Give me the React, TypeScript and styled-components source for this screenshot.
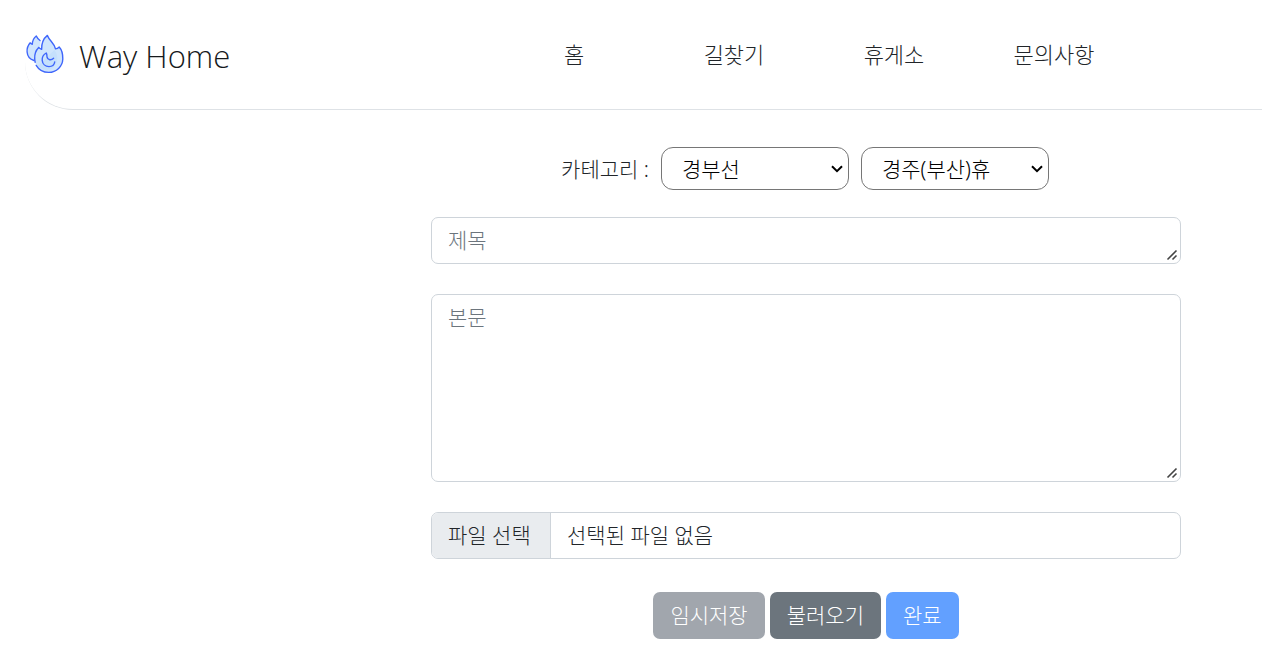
import React from "react";
import styled, { createGlobalStyle, css } from "styled-components";

const GlobalStyle = createGlobalStyle`
  *, *::before, *::after { box-sizing: border-box; }
  body {
    margin: 0;
    background: #fff;
    color: #212529;
    font-family: "Noto Sans", "Noto Sans CJK KR", sans-serif;
    font-size: 21px;
    font-weight: 300;
    line-height: 30px;
  }
  button, select, textarea, input { font: inherit; }
`;

const Header = styled.header`
  display: flex;
  align-items: flex-start;
  justify-content: space-between;
  height: 110px;
  margin-left: 25px;
  padding: 32px 128px 0 0;
  border-bottom: 1px solid #dee2e6;
  border-bottom-left-radius: 48px;
`;

const Brand = styled.a`
  display: flex;
  align-items: center;
  gap: 14px;
  height: 44px;
  color: #16191c;
  font-family: "Open Sans", "Noto Sans", sans-serif;
  font-size: 31px;
  line-height: 44px;
  text-decoration: none;
  white-space: nowrap;
`;

const BrandName = styled.span`
  padding-top: 3px;
`;

const Nav = styled.nav`
  display: grid;
  grid-template-columns: repeat(4, 160px);
  text-align: center;
`;

const NavLink = styled.a`
  height: 44px;
  color: inherit;
  font-size: 22px;
  line-height: 44px;
  text-decoration: none;
`;

const Main = styled.main`
  display: flex;
  justify-content: center;
  padding: 37px 0 32px 350px;
`;

const Form = styled.form`
  display: flex;
  flex-direction: column;
  gap: 30px;
  width: 750px;
  max-width: 100%;
`;

const CategoryRow = styled.div`
  display: flex;
  align-items: center;
  justify-content: center;
  gap: 12px;
  margin: 0 2px -3px 0;
`;

const chevron = `url("data:image/svg+xml,%3Csvg xmlns='http://www.w3.org/2000/svg' width='12' height='8' viewBox='0 0 12 8'%3E%3Cpath d='M1 1.2L6 6.2L11 1.2' fill='none' stroke='%23000' stroke-width='2'/%3E%3C/svg%3E")`;

const grip = `url("data:image/svg+xml,%3Csvg xmlns='http://www.w3.org/2000/svg' width='15' height='15' viewBox='0 0 15 15'%3E%3Cpath d='M2.5 11.5L11.5 2.5M7.5 11.5L11.5 7.5' fill='none' stroke='%23444' stroke-width='1.6'/%3E%3C/svg%3E")`;

const Select = styled.select`
  appearance: none;
  width: 188px;
  height: 43px;
  padding: 0 20px;
  border: 1px solid #767676;
  border-radius: 12px;
  background: #fff ${chevron} no-repeat right 5px center;
  color: #000;
`;

const fieldFrame = css`
  width: 100%;
  border: 1px solid #ced4da;
  border-radius: 7px;
  background: #fff;
`;

const TextArea = styled.textarea<{ $height: number }>`
  ${fieldFrame}
  display: block;
  height: ${(p) => p.$height}px;
  padding: 7px 16px;
  color: #212529;
  overflow: hidden;
  resize: both;
  &::placeholder { color: #6c757d; opacity: 1; }
  &::-webkit-resizer { background: ${grip} no-repeat right bottom; }
`;

const FilePicker = styled.label`
  ${fieldFrame}
  position: relative;
  display: flex;
  height: 47px;
  line-height: 45px;
  overflow: hidden;
`;

const FileInput = styled.input`
  position: absolute;
  inset: 0;
  opacity: 0;
`;

const FileButton = styled.span`
  min-width: 119px;
  padding: 0 16px;
  border-right: 1px solid #ced4da;
  background: #e9ecef;
`;

const FileName = styled.span`
  padding: 0 16px;
`;

const Actions = styled.div`
  display: flex;
  justify-content: center;
  gap: 5px;
  padding-top: 3px;
`;

const Button = styled.button<{ $color: string }>`
  height: 47px;
  padding: 0 17px;
  border: 0;
  border-radius: 7px;
  background: ${(p) => p.$color};
  color: #fff;
  line-height: 45px;
`;

const FlameLogo = () => (
  <svg width="40" height="40" viewBox="0 0 40 40" fill="#cfe5fd" stroke="#3f66fb" strokeWidth="1.4" strokeLinecap="round" strokeLinejoin="round" aria-hidden="true">
    <path d="M15.5 6.6C14 5.5 12.4 4.2 11.4 2C8.7 4 7.4 6.6 7.3 10.3C6.3 10 5.7 9.5 5.2 8.8C2.8 11.5 1.8 14.5 2.1 18C2.4 22 5 25.3 9 26.5L15 16Z" stroke="none" />
    <path d="M15 6.5C13.5 5.5 12.2 4 11.3 2C8.7 4 7.4 6.6 7.3 10.3C6.3 10 5.7 9.5 5.2 8.8C2.8 11.5 1.8 14.5 2.1 18C2.4 22 5 25.3 9 26.5" fill="none" />
    <path d="M11 31.2C13.5 35.6 18 38.4 23.7 38.4C31.5 38.4 37.6 32.3 37.8 25C37.9 20.3 37 16 34.2 13C33.2 14 32 14.7 30.5 14.9C29.5 9.2 24.3 6.8 22.4 1.4C18.6 4.4 16.5 9 16.6 15.4C15.3 15 14.4 14.3 13.7 13.4C10.6 16.5 9.4 20.3 9.7 25Z" stroke="none" />
    <path d="M13 32L29.5 16C34 22 33 31 26 35C21 37 16 35 13 32Z" fill="#b9d9fb" stroke="none" opacity=".45" />
    <path d="M11.2 31.4C13.7 35.7 18.2 38.4 23.7 38.4C31.5 38.4 37.6 32.3 37.8 25C37.9 20.3 37 16 34.2 13C33.2 14 32 14.7 30.5 14.9C29.5 9.2 24.3 6.8 22.4 1.4C18.6 4.4 16.5 9 16.6 15.4C15.3 15 14.4 14.3 13.7 13.4C10.6 16.5 9.4 20.3 9.7 24.8C9.7 26 9.9 27.2 10.2 28.3" fill="none" />
    <path d="M28.6 24.2C26.4 26.6 22.6 26.2 22 23.2C21.9 21.8 22.2 20.4 21.2 19C18.3 20.5 17 23.2 17.2 26.4C17.5 30 20.3 32.6 24 32.6C27.2 32.6 29.3 30.8 29.7 28" fill="none" />
  </svg>
);

const menu = ["홈", "길찾기", "휴게소", "문의사항"];

export default function App() {
  return (
    <>
      <GlobalStyle />
      <Header>
        <Brand href="#">
          <FlameLogo />
          <BrandName>Way Home</BrandName>
        </Brand>
        <Nav>
          {menu.map((name) => (
            <NavLink key={name} href="#">{name}</NavLink>
          ))}
        </Nav>
      </Header>
      <Main>
        <Form onSubmit={(e) => e.preventDefault()}>
          <CategoryRow>
            <label htmlFor="road">카테고리 :</label>
            <Select id="road">
              <option>경부선</option>
            </Select>
            <Select aria-label="휴게소">
              <option>경주(부산)휴</option>
            </Select>
          </CategoryRow>
          <TextArea $height={47} placeholder="제목" aria-label="제목" />
          <TextArea $height={188} placeholder="본문" aria-label="본문" />
          <FilePicker>
            <FileInput type="file" />
            <FileButton>파일 선택</FileButton>
            <FileName>선택된 파일 없음</FileName>
          </FilePicker>
          <Actions>
            <Button type="button" $color="#a1a6ad">임시저장</Button>
            <Button type="button" $color="#6c757d">불러오기</Button>
            <Button type="submit" $color="#62a0ff">완료</Button>
          </Actions>
        </Form>
      </Main>
    </>
  );
}
